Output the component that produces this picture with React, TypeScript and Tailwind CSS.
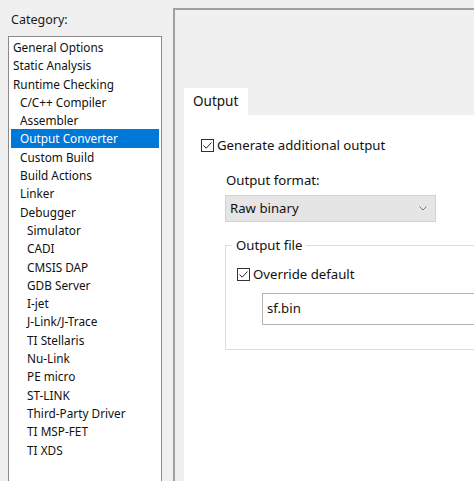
const categories: { label: string; level: number; selected?: boolean }[] = [
  { label: "General Options", level: 0 },
  { label: "Static Analysis", level: 0 },
  { label: "Runtime Checking", level: 0 },
  { label: "C/C++ Compiler", level: 1 },
  { label: "Assembler", level: 1 },
  { label: "Output Converter", level: 1, selected: true },
  { label: "Custom Build", level: 1 },
  { label: "Build Actions", level: 1 },
  { label: "Linker", level: 1 },
  { label: "Debugger", level: 1 },
  { label: "Simulator", level: 2 },
  { label: "CADI", level: 2 },
  { label: "CMSIS DAP", level: 2 },
  { label: "GDB Server", level: 2 },
  { label: "I-jet", level: 2 },
  { label: "J-Link/J-Trace", level: 2 },
  { label: "TI Stellaris", level: 2 },
  { label: "Nu-Link", level: 2 },
  { label: "PE micro", level: 2 },
  { label: "ST-LINK", level: 2 },
  { label: "Third-Party Driver", level: 2 },
  { label: "TI MSP-FET", level: 2 },
  { label: "TI XDS", level: 2 },
]

const indent = ["pl-[2px]", "pl-[9px]", "pl-[16px]"]

function CheckBox() {
  return (
    <span className="flex h-[13px] w-[13px] shrink-0 items-center justify-center border border-[#333333] bg-white">
      <svg width="11" height="11" viewBox="0 0 11 11" fill="none">
        <path d="M1.5 5.5 L4.2 8.2 L9.5 2.5" stroke="#222" strokeWidth="1" />
      </svg>
    </span>
  )
}

export default function App() {
  return (
    <div
      className="flex h-[481px] w-[474px] overflow-hidden bg-[#f0f0f0] text-[#000]"
      style={{ fontFamily: '"Noto Sans", "Open Sans", sans-serif' }}
    >
      {/* category list */}
      <div className="flex w-[162px] shrink-0 flex-col pl-[8px]">
        <div className="mt-[11px] h-[25px] pl-[3px] text-[12.5px] leading-[18px] text-[#1a1a1a]">Category:</div>
        <div className="flex-1 border border-b-0 border-[#8a8a8a] bg-white px-[2px] pt-[1px]">
          {categories.map((c) => (
            <div
              key={c.label}
              className={`h-[18.3px] whitespace-nowrap text-[11.8px] leading-[18.3px] ${indent[c.level]} ${
                c.selected ? "bg-[#0078d7] text-white" : "text-[#111]"
              }`}
            >
              {c.label}
            </div>
          ))}
        </div>
      </div>

      {/* options panel */}
      <div className="ml-[11px] mt-[8px] flex flex-1 flex-col border-l-2 border-t-2 border-[#a0a0a0] pl-[9px]">
        <div className="h-[78px]" />
        <div className="flex">
          <div className="h-[27px] bg-white pl-[9px] pr-[10px] text-[13.5px] leading-[27px] text-[#111]">Output</div>
        </div>
        <div className="flex-1 bg-white pt-[22px] text-[13.2px] text-[#111]">
          <div className="flex items-center gap-[3px] pl-[17px]">
            <CheckBox />
            <span className="leading-[16px]">Generate additional output</span>
          </div>

          <div className="mt-[18px] pl-[42px] leading-[18px]">Output format:</div>
          <div className="ml-[41px] mt-[6px] flex h-[27px] w-[211px] items-center justify-between border border-[#d2d2d2] bg-[#e5e5e5] pl-[4px] pr-[8px]">
            <span>Raw binary</span>
            <svg width="8" height="5" viewBox="0 0 8 5" fill="none">
              <path d="M0.5 0.5 L4 4 L7.5 0.5" stroke="#777" strokeWidth="1" />
            </svg>
          </div>

          <div className="ml-[41px] mt-[23px] border border-r-0 border-[#dcdcdc] pb-[24px]">
            <div className="-mt-[10px] ml-[6px] w-fit bg-white px-[4px] leading-[18px]">Output file</div>
            <div className="mt-[12px] flex items-center gap-[3px] pl-[11px]">
              <CheckBox />
              <span className="leading-[16px]">Override default</span>
            </div>
            <div className="ml-[36px] mt-[11px] flex h-[32px] items-center border border-r-0 border-[#b4b4b4] pl-[4px]">
              sf.bin
            </div>
          </div>
        </div>
      </div>
    </div>
  )
}
